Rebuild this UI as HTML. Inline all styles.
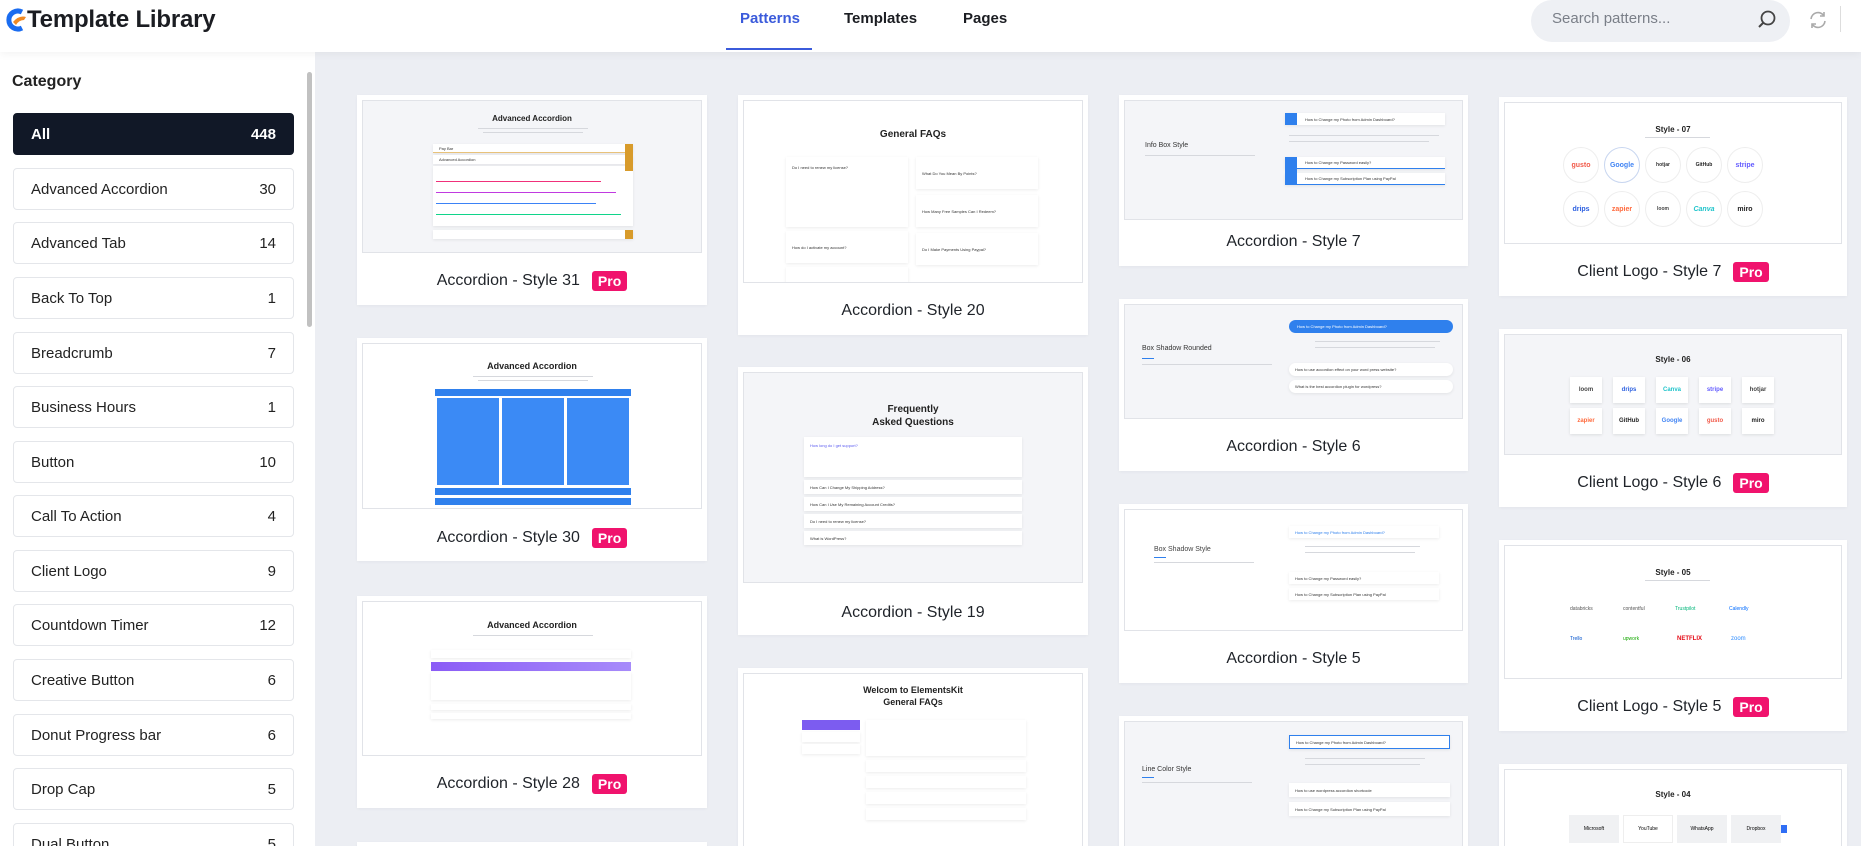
<!DOCTYPE html>
<html><head><meta charset="utf-8"><style>
*{box-sizing:border-box;margin:0;padding:0}
html,body{width:1861px;height:846px;overflow:hidden}
body{background:#eceef3;font-family:"Liberation Sans",sans-serif}
#wrap{position:relative;width:1861px;height:846px;overflow:hidden;background:#eceef3}
.hdr{position:absolute;left:0;top:0;width:1861px;height:52px;background:#fff;box-shadow:0 2px 8px rgba(0,0,0,.05);z-index:2}
.side{position:absolute;left:0;top:52px;width:315px;height:794px;background:#fff;overflow:hidden}
.cat{position:absolute;left:13px;width:281px;height:42px;border:1px solid #e4e6ea;border-radius:4px;font-size:15px;color:#222;display:flex;align-items:center;justify-content:space-between;padding:0 17px 0 17px}
.cat.on{background:#111827;color:#fff;border-color:#111827;font-weight:600}
.card{position:absolute;background:#fff;box-shadow:0 1px 3px rgba(0,0,0,.04);overflow:hidden}
.pv{position:absolute;left:5px;right:5px;top:5px;border:1px solid #e1e3e8;overflow:hidden}
.g{background:#f4f5f8}.w{background:#fff}
.tt{position:absolute;left:0;right:0;height:22px;text-align:center;font-size:16px;color:#1f2329;display:flex;justify-content:center;align-items:center;gap:12px}
.pro{background:#f0136d;color:#fff;font-weight:700;font-size:14px;padding:2px 6px;border-radius:3px}
.a{position:absolute}
.h{position:absolute;font-weight:700;color:#222;text-align:center;left:0;right:0}
.ln{position:absolute;height:2px;background:#d6d8dd}
.row{position:absolute;background:#fff;box-shadow:0 1px 3px rgba(0,0,0,.08);font-size:4px;color:#333;padding-left:6px;display:flex;align-items:center}
.lg{position:absolute;width:36px;height:36px;border-radius:50%;border:1px solid #eee;font-size:7px;display:flex;align-items:center;justify-content:center;font-weight:700}
.bx{position:absolute;width:32px;height:26px;background:#fff;box-shadow:0 1px 3px rgba(0,0,0,.1);font-size:6px;display:flex;align-items:center;justify-content:center;font-weight:700}
</style></head><body><div id="wrap">
<div class="hdr">
  <svg class="a" style="left:5px;top:7px" width="22" height="26" viewBox="0 0 22 26"><path d="M17 5 A9 9 0 1 0 17 21" fill="none" stroke="#1a6cf0" stroke-width="5"/><path d="M8 15 Q14 8 21 10 L19 13 Q14 13 11 18Z" fill="#f08a24"/></svg>
  <div class="a" style="left:27px;top:6px;font-size:24px;font-weight:700;color:#1b1d22;letter-spacing:-0.2px">Template Library</div>
  <div class="a" style="left:740px;top:10px;font-size:15px;color:#3b5bdb;font-weight:600">Patterns</div>
  <div class="a" style="left:726px;top:48px;width:86px;height:2px;background:#3b5bdb"></div>
  <div class="a" style="left:844px;top:10px;font-size:15px;color:#1b1d22;font-weight:600">Templates</div>
  <div class="a" style="left:963px;top:10px;font-size:15px;color:#1b1d22;font-weight:600">Pages</div>
  <div class="a" style="left:1531px;top:0;width:259px;height:42px;background:#eef0f4;border-radius:21px"></div>
  <div class="a" style="left:1552px;top:10px;font-size:15px;color:#7a7f88">Search patterns...</div>
  <svg class="a" style="left:1756px;top:9px" width="22" height="22" viewBox="0 0 22 22"><circle cx="12" cy="9" r="6.5" fill="none" stroke="#444" stroke-width="1.8"/><path d="M7.5 13.5 L3 18" stroke="#444" stroke-width="2"/></svg>
  <svg class="a" style="left:1807px;top:9px" width="22" height="22" viewBox="0 0 22 22" fill="none" stroke="#aaa" stroke-width="1.6"><path d="M4 10 A7 7 0 0 1 17 7"/><path d="M17 3 V7 H13"/><path d="M18 12 A7 7 0 0 1 5 15"/><path d="M5 19 V15 H9"/></svg>
  <div class="a" style="left:1840px;top:6px;width:1px;height:26px;background:#ddd"></div>
</div>
<div class="side">
  <div class="a" style="left:12px;top:21px;font-size:16px;font-weight:600;color:#222">Category</div>
  <div class="a" style="left:307px;top:20px;width:5px;height:255px;background:#c1c1c1;border-radius:3px"></div>
  <div class="cat on" style="top:61px"><span>All</span><span>448</span></div>
  <div class="cat" style="top:116px"><span>Advanced Accordion</span><span>30</span></div>
  <div class="cat" style="top:170px"><span>Advanced Tab</span><span>14</span></div>
  <div class="cat" style="top:225px"><span>Back To Top</span><span>1</span></div>
  <div class="cat" style="top:280px"><span>Breadcrumb</span><span>7</span></div>
  <div class="cat" style="top:334px"><span>Business Hours</span><span>1</span></div>
  <div class="cat" style="top:389px"><span>Button</span><span>10</span></div>
  <div class="cat" style="top:443px"><span>Call To Action</span><span>4</span></div>
  <div class="cat" style="top:498px"><span>Client Logo</span><span>9</span></div>
  <div class="cat" style="top:552px"><span>Countdown Timer</span><span>12</span></div>
  <div class="cat" style="top:607px"><span>Creative Button</span><span>6</span></div>
  <div class="cat" style="top:662px"><span>Donut Progress bar</span><span>6</span></div>
  <div class="cat" style="top:716px"><span>Drop Cap</span><span>5</span></div>
  <div class="cat" style="top:771px"><span>Dual Button</span><span>5</span></div>
</div>

<div class="card" style="left:357px;top:95px;width:350px;height:210px">
  <div class="pv g" style="height:153px">
    <div class="h" style="top:13px;font-size:8px">Advanced Accordion</div>
    <div class="ln" style="left:115px;top:27px;width:110px;height:1px"></div><div class="ln" style="left:120px;top:31px;width:100px;height:1px"></div>
    <div class="row" style="left:70px;top:43px;width:200px;height:9px;border-bottom:1px solid #e8c27a">Pay Bar</div>
    <div class="row" style="left:70px;top:54px;width:200px;height:9px">Advanced Accordion</div>
    <div class="row" style="left:70px;top:65px;width:200px;height:60px"></div>
    <div class="a" style="left:262px;top:43px;width:8px;height:27px;background:#d89b2b"></div>
    <div class="a" style="left:73px;top:80px;width:165px;height:1px;background:#f0307a"></div>
    <div class="a" style="left:73px;top:91px;width:180px;height:1px;background:#c03ae0"></div>
    <div class="a" style="left:73px;top:102px;width:160px;height:1px;background:#3b82f6"></div>
    <div class="a" style="left:73px;top:113px;width:185px;height:1px;background:#10d48a"></div>
    <div class="row" style="left:70px;top:129px;width:200px;height:9px"></div>
    <div class="a" style="left:262px;top:129px;width:8px;height:9px;background:#d89b2b"></div>
  </div>
  <div class="tt" style="top:175px">Accordion - Style 31 <span class="pro">Pro</span></div>
</div>
<div class="card" style="left:357px;top:338px;width:350px;height:223px">
  <div class="pv w" style="height:166px">
    <div class="h" style="top:17px;font-size:9px">Advanced Accordion</div>
    <div class="ln" style="left:110px;top:32px;width:120px;height:1px"></div><div class="ln" style="left:115px;top:36px;width:110px;height:1px"></div>
    <div class="a" style="left:72px;top:45px;width:196px;height:7px;background:#2f80ed"></div>
    <div class="a" style="left:74px;top:54px;width:62px;height:87px;background:#3b8af5"></div>
    <div class="a" style="left:139px;top:54px;width:62px;height:87px;background:#3b8af5"></div>
    <div class="a" style="left:204px;top:54px;width:62px;height:87px;background:#3b8af5"></div>
    <div class="a" style="left:72px;top:144px;width:196px;height:7px;background:#2f80ed"></div>
    <div class="a" style="left:72px;top:154px;width:196px;height:7px;background:#2f80ed"></div>
  </div>
  <div class="tt" style="top:189px">Accordion - Style 30 <span class="pro">Pro</span></div>
</div>
<div class="card" style="left:357px;top:596px;width:350px;height:212px">
  <div class="pv w" style="height:155px">
    <div class="h" style="top:18px;font-size:9px">Advanced Accordion</div>
    <div class="ln" style="left:110px;top:33px;width:120px;height:1px"></div>
    <div class="row" style="left:68px;top:48px;width:200px;height:8px"></div>
    <div class="a" style="left:68px;top:60px;width:200px;height:9px;background:linear-gradient(90deg,#8b5cf6,#a78bfa)"></div>
    <div class="row" style="left:68px;top:70px;width:200px;height:28px"></div>
    <div class="row" style="left:68px;top:102px;width:200px;height:6px"></div>
    <div class="row" style="left:68px;top:111px;width:200px;height:6px"></div>
  </div>
  <div class="tt" style="top:177px">Accordion - Style 28 <span class="pro">Pro</span></div>
</div>
<div class="card" style="left:357px;top:842px;width:350px;height:20px"></div>

<div class="card" style="left:738px;top:95px;width:350px;height:240px">
  <div class="pv w" style="height:183px">
    <div class="h" style="top:28px;font-size:10px">General FAQs</div>
    <div class="row" style="left:42px;top:56px;width:122px;height:70px;align-items:flex-start;padding-top:8px">Do I need to renew my license?</div>
    <div class="row" style="left:42px;top:130px;width:122px;height:32px">How do I activate my account?</div>
    <div class="row" style="left:42px;top:166px;width:122px;height:32px">How long do I get support?</div>
    <div class="row" style="left:172px;top:56px;width:122px;height:32px">What Do You Mean By Points?</div>
    <div class="row" style="left:172px;top:94px;width:122px;height:32px">How Many Free Samples Can I Redeem?</div>
    <div class="row" style="left:172px;top:132px;width:122px;height:32px">Do I Make Payments Using Paypal?</div>
  </div>
  <div class="tt" style="top:205px">Accordion - Style 20</div>
</div>
<div class="card" style="left:738px;top:367px;width:350px;height:268px">
  <div class="pv g" style="height:211px">
    <div class="h" style="top:30px;font-size:10px;line-height:13px">Frequently<br>Asked Questions</div>
    <div class="row" style="left:60px;top:64px;width:218px;height:40px;align-items:flex-start;padding-top:6px;color:#5b5bf0">How long do I get support?</div>
    <div class="row" style="left:60px;top:107px;width:218px;height:14px">How Can I Change My Shipping Address?</div>
    <div class="row" style="left:60px;top:124px;width:218px;height:14px">How Can I Use My Remaining Account Credits?</div>
    <div class="row" style="left:60px;top:141px;width:218px;height:14px">Do I need to renew my license?</div>
    <div class="row" style="left:60px;top:158px;width:218px;height:14px">What is WordPress?</div>
  </div>
  <div class="tt" style="top:235px">Accordion - Style 19</div>
</div>
<div class="card" style="left:738px;top:668px;width:350px;height:200px">
  <div class="pv w" style="height:200px">
    <div class="h" style="top:10px;font-size:9px;line-height:12px">Welcom to ElementsKit<br>General FAQs</div>
    <div class="a" style="left:58px;top:46px;width:58px;height:10px;background:#7c5cf0"></div>
    <div class="row" style="left:58px;top:58px;width:58px;height:10px"></div>
    <div class="row" style="left:58px;top:70px;width:58px;height:10px"></div>
    <div class="row" style="left:122px;top:46px;width:160px;height:36px"></div>
    <div class="row" style="left:122px;top:86px;width:160px;height:12px"></div>
    <div class="row" style="left:122px;top:102px;width:160px;height:12px"></div>
    <div class="row" style="left:122px;top:118px;width:160px;height:12px"></div>
    <div class="row" style="left:122px;top:134px;width:160px;height:12px"></div>
  </div>
</div>

<div class="card" style="left:1119px;top:95px;width:349px;height:171px">
  <div class="pv g" style="height:120px">
    <div class="a" style="left:20px;top:41px;font-size:7px;color:#333">Info Box Style</div>
    <div class="ln" style="left:20px;top:54px;width:110px;height:1px"></div>
    <div class="row" style="left:160px;top:12px;width:160px;height:12px;padding-left:20px">How to Change my Photo from Admin Dashboard?</div>
    <div class="a" style="left:160px;top:12px;width:12px;height:12px;background:#2f80ed"></div>
    <div class="ln" style="left:164px;top:34px;width:150px;height:1px"></div><div class="ln" style="left:164px;top:40px;width:140px;height:1px"></div>
    <div class="row" style="left:160px;top:56px;width:160px;height:12px;padding-left:20px;border-bottom:1px solid #2f80ed">How to Change my Password easily?</div>
    <div class="row" style="left:160px;top:72px;width:160px;height:12px;padding-left:20px;border-bottom:1px solid #2f80ed">How to Change my Subscription Plan using PayPal</div>
    <div class="a" style="left:160px;top:56px;width:12px;height:28px;background:#2f80ed"></div>
  </div>
  <div class="tt" style="top:136px">Accordion - Style 7</div>
</div>
<div class="card" style="left:1119px;top:299px;width:349px;height:172px">
  <div class="pv g" style="height:115px">
    <div class="a" style="left:17px;top:40px;font-size:7px;color:#333">Box Shadow Rounded</div>
    <div class="a" style="left:17px;top:53px;width:12px;height:1px;background:#2f80ed"></div>
    <div class="ln" style="left:17px;top:59px;width:130px;height:1px"></div>
    <div class="a" style="left:164px;top:15px;width:164px;height:13px;border-radius:7px;background:#2f80ed;font-size:4px;color:#fff;padding:4px 8px">How to Change my Photo from Admin Dashboard?</div>
    <div class="ln" style="left:190px;top:36px;width:125px;height:1px"></div><div class="ln" style="left:190px;top:42px;width:120px;height:1px"></div>
    <div class="row" style="left:164px;top:58px;width:164px;height:13px;border-radius:7px">How to use accordion effect on your word press website?</div>
    <div class="row" style="left:164px;top:75px;width:164px;height:13px;border-radius:7px">What is the best accordion plugin for wordpress?</div>
  </div>
  <div class="tt" style="top:137px">Accordion - Style 6</div>
</div>
<div class="card" style="left:1119px;top:504px;width:349px;height:179px">
  <div class="pv w" style="height:122px">
    <div class="a" style="left:29px;top:36px;font-size:7px;color:#444">Box Shadow Style</div>
    <div class="a" style="left:29px;top:47px;width:12px;height:1px;background:#2f80ed"></div>
    <div class="ln" style="left:29px;top:52px;width:100px;height:1px"></div>
    <div class="row" style="left:164px;top:16px;width:150px;height:12px;color:#2f80ed">How to Change my Photo from Admin Dashboard?</div>
    <div class="ln" style="left:180px;top:36px;width:115px;height:1px"></div><div class="ln" style="left:180px;top:42px;width:110px;height:1px"></div>
    <div class="row" style="left:164px;top:62px;width:150px;height:12px">How to Change my Password easily?</div>
    <div class="row" style="left:164px;top:78px;width:150px;height:12px">How to Change my Subscription Plan using PayPal</div>
  </div>
  <div class="tt" style="top:144px">Accordion - Style 5</div>
</div>
<div class="card" style="left:1119px;top:716px;width:349px;height:160px">
  <div class="pv g" style="height:160px">
    <div class="a" style="left:17px;top:44px;font-size:7px;color:#333">Line Color Style</div>
    <div class="a" style="left:17px;top:55px;width:12px;height:1px;background:#2f80ed"></div>
    <div class="ln" style="left:17px;top:60px;width:110px;height:1px"></div>
    <div class="row" style="left:164px;top:13px;width:161px;height:14px;border:1px solid #2f80ed">How to Change my Photo from Admin Dashboard?</div>
    <div class="ln" style="left:180px;top:36px;width:120px;height:1px"></div><div class="ln" style="left:180px;top:42px;width:115px;height:1px"></div>
    <div class="row" style="left:164px;top:61px;width:161px;height:14px">How to use wordpress accordion shortcode</div>
    <div class="row" style="left:164px;top:80px;width:161px;height:14px">How to Change my Subscription Plan using PayPal</div>
  </div>
</div>

<div class="card" style="left:1499px;top:97px;width:348px;height:199px">
  <div class="pv w" style="height:142px">
    <div class="h" style="top:22px;font-size:8px">Style - 07</div>
    <div class="ln" style="left:140px;top:34px;width:65px;height:1px"></div>
    <div class="lg" style="left:58px;top:44px;color:#f15a4a">gusto</div>
    <div class="lg" style="left:99px;top:44px;color:#4285f4;border-color:#c8d6f0">Google</div>
    <div class="lg" style="left:140px;top:44px;color:#333;font-size:5px">hotjar</div>
    <div class="lg" style="left:181px;top:44px;color:#222;font-size:5px">GitHub</div>
    <div class="lg" style="left:222px;top:44px;color:#635bff">stripe</div>
    <div class="lg" style="left:58px;top:88px;color:#2b5fe0">drips</div>
    <div class="lg" style="left:99px;top:88px;color:#ff6a3d">zapier</div>
    <div class="lg" style="left:140px;top:88px;color:#444;font-size:5px">loom</div>
    <div class="lg" style="left:181px;top:88px;color:#20c4cb;font-style:italic">Canva</div>
    <div class="lg" style="left:222px;top:88px;color:#222">miro</div>
  </div>
  <div class="tt" style="top:164px">Client Logo - Style 7 <span class="pro">Pro</span></div>
</div>
<div class="card" style="left:1499px;top:329px;width:348px;height:178px">
  <div class="pv g" style="height:121px">
    <div class="h" style="top:20px;font-size:8px">Style - 06</div>
    <div class="bx" style="left:65px;top:42px;color:#444">loom</div>
    <div class="bx" style="left:108px;top:42px;color:#2b5fe0">drips</div>
    <div class="bx" style="left:151px;top:42px;color:#20c4cb">Canva</div>
    <div class="bx" style="left:194px;top:42px;color:#635bff">stripe</div>
    <div class="bx" style="left:237px;top:42px;color:#444">hotjar</div>
    <div class="bx" style="left:65px;top:73px;color:#ff6a3d">zapier</div>
    <div class="bx" style="left:108px;top:73px;color:#222">GitHub</div>
    <div class="bx" style="left:151px;top:73px;color:#4285f4">Google</div>
    <div class="bx" style="left:194px;top:73px;color:#f15a4a">gusto</div>
    <div class="bx" style="left:237px;top:73px;color:#222">miro</div>
  </div>
  <div class="tt" style="top:143px">Client Logo - Style 6 <span class="pro">Pro</span></div>
</div>
<div class="card" style="left:1499px;top:540px;width:348px;height:191px">
  <div class="pv w" style="height:134px">
    <div class="h" style="top:22px;font-size:8px">Style - 05</div>
    <div class="ln" style="left:140px;top:34px;width:65px;height:1px"></div>
    <div class="a" style="left:65px;top:60px;font-size:5px;color:#555">databricks</div>
    <div class="a" style="left:118px;top:60px;font-size:5px;color:#555">contentful</div>
    <div class="a" style="left:170px;top:60px;font-size:5px;color:#00b67a">Trustpilot</div>
    <div class="a" style="left:224px;top:60px;font-size:5px;color:#006bff">Calendly</div>
    <div class="a" style="left:65px;top:90px;font-size:5px;color:#0052cc">Trello</div>
    <div class="a" style="left:118px;top:90px;font-size:5px;color:#14a800">upwork</div>
    <div class="a" style="left:172px;top:90px;font-size:6px;color:#e50914;font-weight:700">NETFLIX</div>
    <div class="a" style="left:226px;top:90px;font-size:6px;color:#2d8cff">zoom</div>
  </div>
  <div class="tt" style="top:156px">Client Logo - Style 5 <span class="pro">Pro</span></div>
</div>
<div class="card" style="left:1499px;top:764px;width:348px;height:120px">
  <div class="pv w" style="height:120px">
    <div class="h" style="top:20px;font-size:8px">Style - 04</div>
    <div class="a" style="left:64px;top:45px;width:50px;height:28px;background:#f0f1f3;font-size:5px;display:flex;align-items:center;justify-content:center">Microsoft</div>
    <div class="a" style="left:118px;top:45px;width:50px;height:28px;background:#fff;border:1px solid #eee;font-size:5px;display:flex;align-items:center;justify-content:center">YouTube</div>
    <div class="a" style="left:172px;top:45px;width:50px;height:28px;background:#f0f1f3;font-size:5px;display:flex;align-items:center;justify-content:center">WhatsApp</div>
    <div class="a" style="left:226px;top:45px;width:50px;height:28px;background:#f0f1f3;font-size:5px;display:flex;align-items:center;justify-content:center">Dropbox</div>
    <div class="a" style="left:276px;top:55px;width:6px;height:8px;background:#2f6ef5"></div>
  </div>
</div>
</div></body></html>
